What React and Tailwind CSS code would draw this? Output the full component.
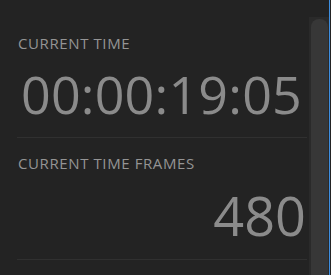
export default function App() {
  const font = { fontFamily: '"Open Sans", "Noto Sans", sans-serif' };
  return (
    <div className="w-[331px] h-[275px] bg-[#232323] flex overflow-hidden" style={font}>
      <div className="flex-1 pl-[17px] pr-[2px] pt-[36px] flex flex-col">
        <div className="pl-px text-[15px] leading-none tracking-[0.6px] text-[#949494]">CURRENT TIME</div>
        <div className="mt-[17px] text-[52px] leading-none tracking-[0.2px] text-[#8b8b8b] text-right pr-[5px]">00:00:19:05</div>
        <div className="mt-[17px] h-px bg-[#303030]" />
        <div className="mt-[18px] pl-px text-[15px] leading-none tracking-[0.6px] text-[#949494]">CURRENT TIME FRAMES</div>
        <div className="mt-[17px] text-[54px] leading-none text-[#8b8b8b] text-right pr-[1px]">480</div>
        <div className="mt-[17px] h-px bg-[#303030]" />
      </div>
      <div className="w-[20px] pt-[17px] flex">
        <div className="flex-1 bg-[#2a2a2a] pl-[2px] pr-[1px] pt-[2px]">
          <div className="h-full bg-[#373737] rounded-t-[8px]" />
        </div>
      </div>
      <div className="w-px bg-[#3d8ee0]" />
      <div className="w-px bg-[#232323]" />
    </div>
  );
}
